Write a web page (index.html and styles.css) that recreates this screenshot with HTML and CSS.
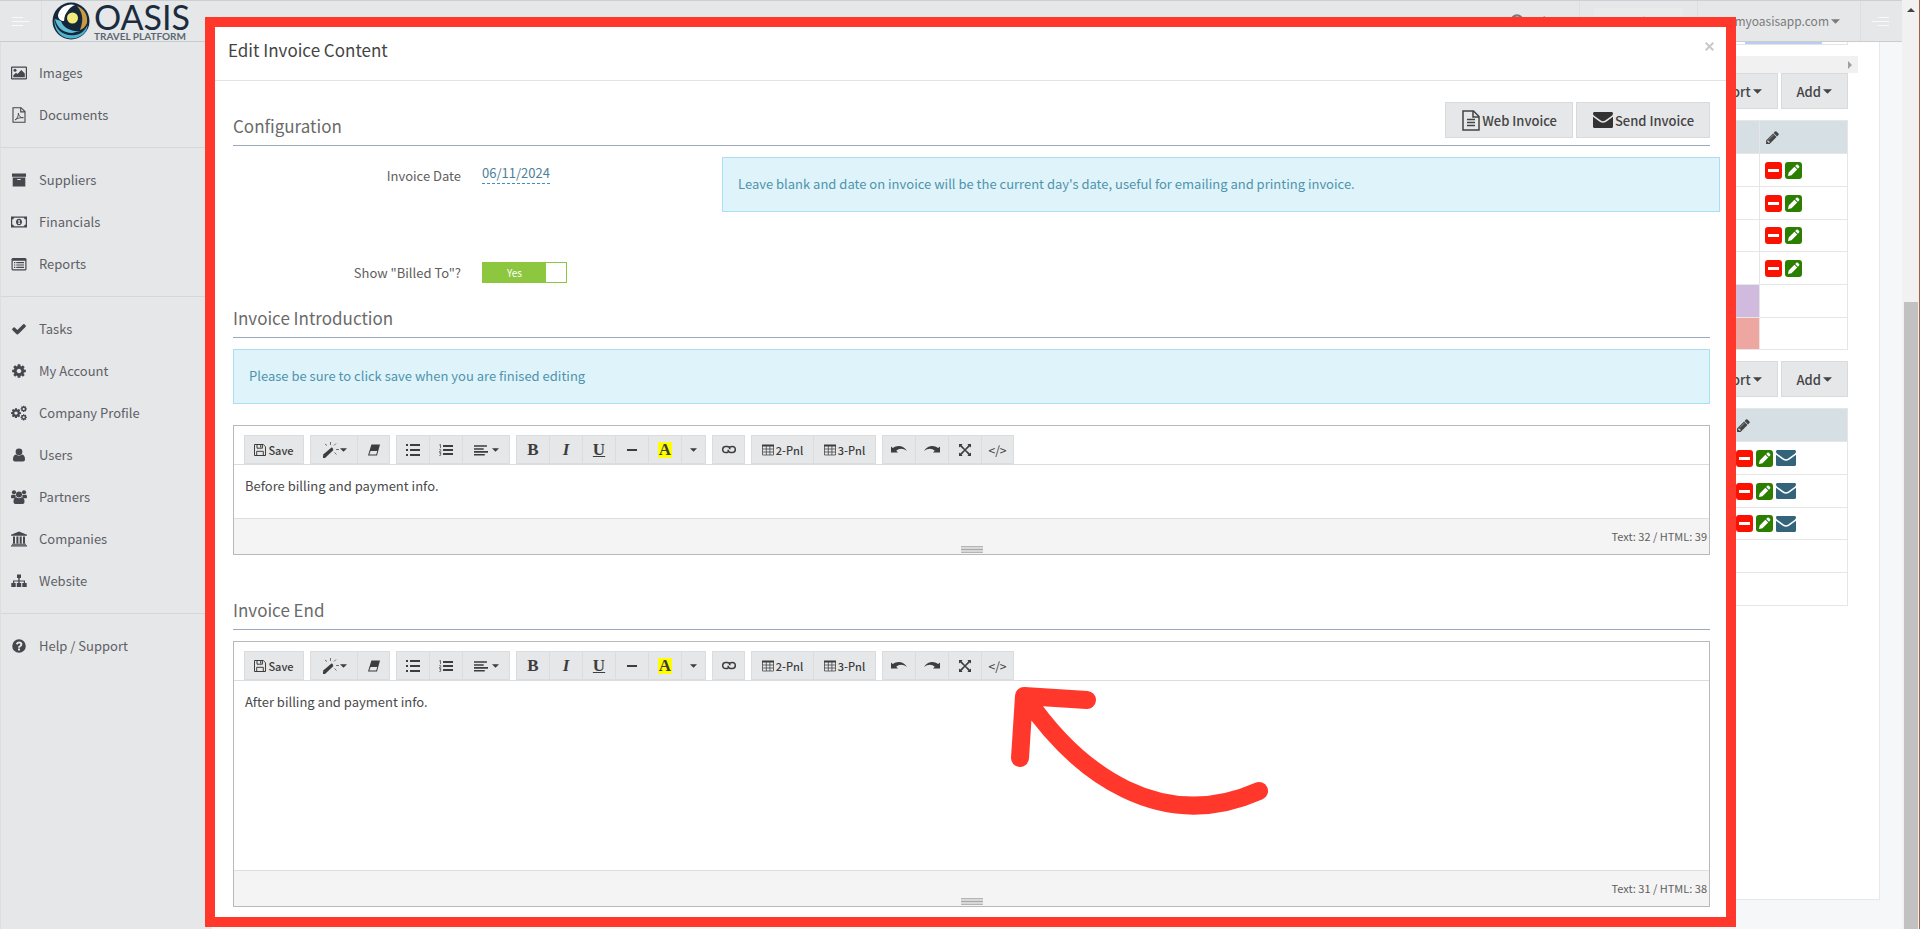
FILE: index.html
```html
<!DOCTYPE html>
<html lang="en">
<head>
    <meta charset="UTF-8">
    <meta name="viewport" content="width=device-width, initial-scale=1.0">
    <title>Edit Invoice Content</title>
    <link rel="stylesheet" href="styles.css">
</head>
<body>
    <!-- icon set -->
    <svg class="sprite" aria-hidden="true">
        <symbol id="i-image" viewBox="0 0 16 16"><path fill-rule="evenodd" d="M1 1.500h14a1 1 0 0 1 1 1v11a1 1 0 0 1-1 1H1a1 1 0 0 1-1-1v-11a1 1 0 0 1 1-1zM1.200 2.700v10.600h13.600V2.700z"/><circle cx="4" cy="5.300" r="1.500"/><path d="M2.300 12.300v-2L5 7.700l1.500 1.400L10.300 5l3.500 3.600v3.700z"/></symbol>
        <symbol id="i-pdf" viewBox="0 0 16 16"><g fill="none" stroke="currentColor" stroke-width="1.100"><path d="M2 .7h8L14 4.600v10.700H2z"/><path d="M9.700.7v4.200H14"/><path d="M4 13c2-1 3.800-4.500 3.400-7 .2 3 2.200 5 5 4.700C9 10.300 6 11.400 4 13z" stroke-width=".9"/></g></symbol>
        <symbol id="i-archive" viewBox="0 0 16 16"><path d="M1 1.500h14v3.300H1z"/><path fill-rule="evenodd" d="M1.700 5.600h12.600v9H1.700zM6.300 7v1.100h3.400V7z"/></symbol>
        <symbol id="i-money" viewBox="0 0 16 16"><path fill-rule="evenodd" d="M0 2.500h16v11H0zM3 3.700A2 2 0 0 1 1.200 5.600v4.800A2 2 0 0 1 3 12.300h10a2 2 0 0 1 1.800-1.900V5.600A2 2 0 0 1 13 3.700z"/><path fill-rule="evenodd" d="M8 4.700c1.900 0 3 1.500 3 3.300s-1.100 3.300-3 3.300S5 9.800 5 8s1.100-3.300 3-3.300zM7 6.800v.8h.6v1.700H7v.8h2.300v-.8h-.6V5.900H8z"/></symbol>
        <symbol id="i-listalt" viewBox="0 0 16 16"><path fill-rule="evenodd" d="M1.500 2h13l1 1v10.500l-1 1h-13l-1-1V3zM1.700 4.800v8.500h12.600V4.800z"/><path d="M3 6h1.300v1.200H3zM5.300 6H13v1.200H5.300zM3 8.400h1.300v1.200H3zM5.300 8.400H13v1.200H5.300zM3 10.800h1.300V12H3zM5.300 10.800H13V12H5.300z"/></symbol>
        <symbol id="i-check" viewBox="0 0 1792 1792"><path d="M1671 566q0 40-28 68l-724 724-136 136q-28 28-68 28t-68-28l-136-136-362-362q-28-28-28-68t28-68l136-136q28-28 68-28t68 28l294 295 656-657q28-28 68-28t68 28l136 136q28 28 28 68z"/></symbol>
        <symbol id="i-cog" viewBox="0 0 1792 1792"><path d="M1152 896q0-106-75-181t-181-75-181 75-75 181 75 181 181 75 181-75 75-181zm512-109v222q0 12-8 23t-20 13l-185 28q-19 54-39 91 35 50 107 138 10 12 10 25t-9 23q-27 37-99 108t-94 71q-12 0-26-9l-138-108q-44 23-91 38-16 136-29 186-7 28-36 28h-222q-14 0-24.500-8.500t-11.500-21.500l-28-184q-49-16-90-37l-141 107q-10 9-25 9-14 0-25-11-126-114-165-168-7-10-7-23 0-12 8-23 15-21 51-66.500t54-70.500q-27-50-41-99l-183-27q-13-2-21-12.500t-8-23.500v-222q0-12 8-23t19-13l186-28q14-46 39-92-40-57-107-138-10-12-10-24 0-10 9-23 26-36 98.500-107.500t94.500-71.500q13 0 26 10l138 107q44-23 91-38 16-136 29-186 7-28 36-28h222q14 0 24.500 8.500t11.500 21.500l28 184q49 16 90 37l142-107q9-9 24-9 13 0 25 10 129 119 165 170 7 8 7 22 0 12-8 23-15 21-51 66.500t-54 70.500q26 50 41 98l183 28q13 2 21 12.500t8 23.500z"/></symbol>
        <symbol id="i-cogs" viewBox="0 0 16 16"><use href="#i-cog" x="-.8" y="2.300" width="11.600" height="11.600"/><use href="#i-cog" x="9" y=".2" width="7.400" height="7.400"/><use href="#i-cog" x="9" y="8.600" width="7.400" height="7.400"/></symbol>
        <symbol id="i-user" viewBox="0 0 16 16"><circle cx="8" cy="4.800" r="3.400"/><path d="M5 7.500C2.800 8 2 9.800 2 12.300c0 1.400.8 2.200 2 2.200h8c1.200 0 2-.8 2-2.200 0-2.500-.8-4.300-3-4.800-1.600 1.500-4.400 1.500-6 0z"/></symbol>
        <symbol id="i-group" viewBox="0 0 16 16"><circle cx="3" cy="3.300" r="2.100"/><circle cx="13" cy="3.300" r="2.100"/><circle cx="8" cy="5.600" r="3"/><path d="M1.200 5.500C.3 6 0 7 0 8.200c0 .6.400 1 1 1h2.800C5 8.400 4.600 6.800 4.600 5.800c-1.200.5-2.500.4-3.400-.3zM14.800 5.500c.9.500 1.200 1.500 1.200 2.700 0 .6-.4 1-1 1h-2.800c-1.200-.8-.8-2.400-.8-3.400 1.200.5 2.500.4 3.400-.3zM5.200 8.300c-2 .4-2.700 2-2.700 4.400 0 1.300.8 2.300 2 2.300h7c1.200 0 2-1 2-2.300 0-2.400-.7-4-2.700-4.400-1.600 1.300-4 1.300-5.600 0z"/></symbol>
        <symbol id="i-bank" viewBox="0 0 16 16"><path d="M8 .5l8 3.200v1H0v-1zM2 5.500h2v7H2zM5.400 5.500h2v7h-2zM8.700 5.500h2v7h-2zM12 5.500h2v7h-2zM1 12.800h14v1H1zM0 14.200h16v1.300H0z"/></symbol>
        <symbol id="i-sitemap" viewBox="0 0 16 16"><path d="M6 1.500h4V5H8.700v2.500H14V10h1.700v4h-4.400v-4h1.500V8.600H8.700V10h1.500v4H5.800v-4h1.500V8.600H3.200V10h1.500v4H.3v-4H2V7.500h5.300V5H6z"/></symbol>
        <symbol id="i-help" viewBox="0 0 16 16"><path fill-rule="evenodd" d="M8 1.200a6.800 6.800 0 1 1 0 13.600A6.800 6.800 0 0 1 8 1.200zM7 10.500v2h2v-2zM4.900 5.700l1.400 1.100C7 5.800 7.500 5.500 8.200 5.500c.8 0 1.100.4 1.100.9 0 1-2.300 1.100-2.300 3.300h2c0-1.100 2.400-1.300 2.400-3.500C11.400 4.600 10 3.500 8.300 3.500c-1.500 0-2.600.7-3.400 2.200z"/></symbol>
        <symbol id="i-share" viewBox="0 0 16 16"><path d="M4 1h10v9l-3-3-7 8-3-3 8-7z"/></symbol>
        <symbol id="i-pencil" viewBox="0 0 1792 1792"><path d="M491 1536l91-91-235-235-91 91v107h128v128h107zm523-928q0-22-22-22-10 0-17 7l-542 542q-7 7-7 17 0 22 22 22 10 0 17-7l542-542q7-7 7-17zm-54-192l416 416-832 832h-416v-416zm683 96q0 53-37 90l-166 166-416-416 166-165q36-38 90-38 53 0 91 38l235 234q37 39 37 91z"/></symbol>
        <symbol id="i-minusbox" viewBox="0 0 17 17"><rect width="17" height="17" rx="3" fill="#fb1100"/><path fill="#fff" d="M3 7h11v3H3z"/></symbol>
        <symbol id="i-editbox" viewBox="0 0 17 17"><rect width="17" height="17" rx="3" fill="#2a7f00"/><path fill="#fff" d="M3 14l.7-3.400 5.700-5.800L12.200 7.600 6.500 13.300zM10.200 4l1.200-1.200c.5-.4 1-.4 1.400 0l1.300 1.300c.4.500.4 1 0 1.400L12.900 6.800z"/></symbol>
        <symbol id="i-mail" viewBox="0 0 20 16"><path d="M0 1.500C0 .6.600 0 1.500 0h17c.9 0 1.500.6 1.500 1.500 0 1-.6 1.800-1.500 2.500l-6.300 4.500c-1.600 1-2.800 1-4.400 0L1.500 4C.6 3.300 0 2.500 0 1.500zM0 4.800l6.800 4.900c2.300 1.500 4.100 1.500 6.400 0L20 4.800v9.700c0 .9-.6 1.500-1.500 1.500h-17C.6 16 0 15.400 0 14.500z"/></symbol>
        <symbol id="i-file" viewBox="0 0 18 21"><g fill="none" stroke="currentColor" stroke-width="1.500"><path d="M1 1h10.500L17 6.500V20H1z"/><path d="M11 1v6h6M5 9.500h8M5 12.500h8M5 15.500h8"/></g></symbol>
        <symbol id="i-save" viewBox="0 0 12 12"><g fill="none" stroke="currentColor"><path d="M.5.500h8.800l2.200 2.200v8.800H.5z"/><path d="M3 .5v3.700h5.400V.5M2.700 11.500V7.300h6.600v4.200M6.700 1v2.500"/></g></symbol>
        <symbol id="i-magic" viewBox="0 0 18 16"><path d="M1 14l8.500-8 2 2L3 16H1z"/><path d="M1.500 13.500l9-7.500" stroke="currentColor" stroke-width="2"/><path fill="none" stroke="currentColor" stroke-opacity=".7" d="M8.500 0v3M3 2l2 1.600M14 1.500l-2 2M14 7.500h3M12.500 10.500l2 2"/></symbol>
        <symbol id="i-eraser" viewBox="0 0 12 12"><path fill-rule="evenodd" d="M3.400.5H12L9 11.500H0zM2.600 7l-1.300 3.500h6.900L9.300 7z"/></symbol>
        <symbol id="i-ul" viewBox="0 0 14 12"><path d="M0 0h2v2H0zM4 0h10v2H4zM0 5h2v2H0zM4 5h10v2H4zM0 10h2v2H0zM4 10h10v2H4z"/></symbol>
        <symbol id="i-ol" viewBox="0 0 14 12"><path d="M4 1h10v2H4zM4 5h10v2H4zM4 9h10v2H4z"/><path fill="none" stroke="currentColor" stroke-width=".7" d="M.3 1L1.500.4V4M.3 5.600c1-.8 2 0 1.500.8L.3 8h2M.3 9h1.700L1.200 10c1.300.2 1 1.700-.9 1.500"/></symbol>
        <symbol id="i-align" viewBox="0 0 13 11"><path d="M0 1h12v1.500H0zM0 3.800h9v1.500H0zM0 6.500h13V8H0zM0 9.200h10v1.500H0z"/></symbol>
        <symbol id="i-minus" viewBox="0 0 10 12"><path d="M0 5h10v2H0z"/></symbol>
        <symbol id="i-link" viewBox="0 0 16 10"><g fill="none" stroke="currentColor" stroke-width="1.700"><path d="M7.300 7.600c-.8.600-1.500.8-3 .8C2.200 8.400 1 7 1 5s1.200-3.400 3.300-3.400h1.600C8 1.600 9 3 9 4.600"/><path d="M8.700 2.400c.8-.6 1.500-.8 3-.8C13.800 1.600 15 3 15 5s-1.200 3.400-3.300 3.400h-1.600C8 8.400 7 7 7 5.400"/></g></symbol>
        <symbol id="i-table" viewBox="0 0 12 11"><g fill="none" stroke="currentColor"><path d="M.5 1h11v9.500H.5zM.5 4.500h11M.5 7.500h11M4.300 1v9.500M7.900 1v9.500" stroke-opacity=".75"/><path d="M0 1h12" stroke-width="2"/></g></symbol>
        <symbol id="i-undo" viewBox="0 0 16 8"><path d="M0 1l1.800 1.600C6-.8 12.500-.5 16 5.500 12 2.300 8 2.500 5.200 5.200L7 7H0z"/></symbol>
        <symbol id="i-redo" viewBox="0 0 16 8"><path d="M16 1l-1.800 1.600C10-.8 3.500-.5 0 5.500 4 2.300 8 2.500 10.800 5.200L9 7h7z"/></symbol>
        <symbol id="i-expand" viewBox="0 0 12 12"><path d="M0 0h3.600L2.600 1.200 6 5l3.400-3.800L8.400 0H12v3.600l-1.200-1L7 6l3.800 3.400 1.200-1V12H8.400l1-1.200L6 7l-3.400 3.800 1 1.200H0V8.400l1.200 1L5 6 1.200 2.600 0 3.600z"/></symbol>
        <symbol id="i-caret" viewBox="0 0 8 4"><path d="M0 0h8L4 4z"/></symbol>
    </svg>

    <div class="app">
        <header class="topbar">
            <button class="menu-toggle" aria-label="Toggle menu"><span></span><span></span><span></span></button>
            <a class="logo" href="#">
                <svg width="38" height="38" viewBox="0 0 38 38">
                    <circle cx="19" cy="19" r="18.500" fill="#14283a"/>
                    <path fill="#4fb3cf" d="M2.500 16c0 12 10 19 21 17 6-1 10-5 12-10 0 8-8 13.500-16 13.500C9 36.500 1 28 2.500 16z"/>
                    <path fill="#62bdd4" d="M3 17c2 9 9 14 17 14l8-2C20 30 11 26 9 19z"/>
                    <path fill="#fff" d="M6 13C8 4 17 1 23 3c-5 2-9 6-11 16-3 0-6-2-6-6z"/>
                    <path fill="#c99a45" d="M25 4c8 3 11 10 10 17-2 4-4 6-7 7 3-8 4-16-3-24z"/>
                    <circle cx="20" cy="16" r="7.500" fill="#14283a"/>
                    <circle cx="20.500" cy="16" r="5.500" fill="#f3ec7c"/>
                </svg>
                <span class="logo-text"><span class="logo-name">OASIS</span><span class="logo-tag">TRAVEL PLATFORM</span></span>
            </a>
            <nav class="top-links">
                <a class="top-link" href="#"><svg class="ico"><use href="#i-help"/></svg>Help</a>
                <span class="top-cell"><button class="quick-add"><svg class="ico ico-sm"><use href="#i-share"/></svg>Quick Add</button></span>
                <a class="top-link account" href="#">test@myoasisapp.com<svg class="caret"><use href="#i-caret"/></svg></a>
                <button class="menu-toggle right" aria-label="Toggle panel"><span></span><span></span><span></span></button>
            </nav>
        </header>

        <div class="layout">
            <nav class="sidebar">
                <a href="#"><svg class="ico"><use href="#i-image"/></svg>Images</a>
                <a href="#"><svg class="ico"><use href="#i-pdf"/></svg>Documents</a>
                <hr>
                <a href="#"><svg class="ico"><use href="#i-archive"/></svg>Suppliers</a>
                <a href="#"><svg class="ico"><use href="#i-money"/></svg>Financials</a>
                <a href="#"><svg class="ico"><use href="#i-listalt"/></svg>Reports</a>
                <hr>
                <a href="#"><svg class="ico"><use href="#i-check"/></svg>Tasks</a>
                <a href="#"><svg class="ico"><use href="#i-cog"/></svg>My Account</a>
                <a href="#"><svg class="ico"><use href="#i-cogs"/></svg>Company Profile</a>
                <a href="#"><svg class="ico"><use href="#i-user"/></svg>Users</a>
                <a href="#"><svg class="ico"><use href="#i-group"/></svg>Partners</a>
                <a href="#"><svg class="ico"><use href="#i-bank"/></svg>Companies</a>
                <a href="#"><svg class="ico"><use href="#i-sitemap"/></svg>Website</a>
                <hr>
                <a href="#"><svg class="ico"><use href="#i-help"/></svg>Help / Support</a>
            </nav>

            <main class="content">
                <div class="panel">
                    <div class="table-end"><span></span></div>
                    <div class="h-scroll"><svg width="4" height="8" viewBox="0 0 4 8"><path d="M0 0l4 4-4 4z"/></svg></div>
                    <div class="panel-buttons">
                        <button class="btn">Export<svg class="caret"><use href="#i-caret"/></svg></button>
                        <button class="btn">Add<svg class="caret"><use href="#i-caret"/></svg></button>
                    </div>
                    <table class="grid-table">
                        <thead><tr><th></th><th class="col-actions"><svg class="ico ico-pencil"><use href="#i-pencil"/></svg></th></tr></thead>
                        <tbody>
                            <tr><td></td><td><div class="acts"><svg><use href="#i-minusbox"/></svg><svg><use href="#i-editbox"/></svg></div></td></tr>
                            <tr><td></td><td><div class="acts"><svg><use href="#i-minusbox"/></svg><svg><use href="#i-editbox"/></svg></div></td></tr>
                            <tr><td></td><td><div class="acts"><svg><use href="#i-minusbox"/></svg><svg><use href="#i-editbox"/></svg></div></td></tr>
                            <tr><td></td><td><div class="acts"><svg><use href="#i-minusbox"/></svg><svg><use href="#i-editbox"/></svg></div></td></tr>
                            <tr><td class="purple"></td><td></td></tr>
                            <tr><td class="red"></td><td></td></tr>
                        </tbody>
                    </table>
                    <div class="panel-buttons">
                        <button class="btn">Export<svg class="caret"><use href="#i-caret"/></svg></button>
                        <button class="btn">Add<svg class="caret"><use href="#i-caret"/></svg></button>
                    </div>
                    <table class="grid-table">
                        <thead><tr><th></th><th class="col-wide"><svg class="ico ico-pencil"><use href="#i-pencil"/></svg></th></tr></thead>
                        <tbody>
                            <tr><td></td><td><div class="acts"><svg><use href="#i-minusbox"/></svg><svg><use href="#i-editbox"/></svg><svg class="mail"><use href="#i-mail"/></svg></div></td></tr>
                            <tr><td></td><td><div class="acts"><svg><use href="#i-minusbox"/></svg><svg><use href="#i-editbox"/></svg><svg class="mail"><use href="#i-mail"/></svg></div></td></tr>
                            <tr><td></td><td><div class="acts"><svg><use href="#i-minusbox"/></svg><svg><use href="#i-editbox"/></svg><svg class="mail"><use href="#i-mail"/></svg></div></td></tr>
                            <tr><td></td><td></td></tr>
                            <tr><td></td><td></td></tr>
                        </tbody>
                    </table>
                </div>
            </main>
        </div>
    </div>

    <div class="page-scroll">
        <svg width="8" height="4" viewBox="0 0 8 4"><path d="M0 4l4-4 4 4z"/></svg>
        <div class="thumb"></div>
    </div>

    <div class="modal" role="dialog" aria-labelledby="modal-title">
        <div class="modal-header">
            <h1 id="modal-title">Edit Invoice Content</h1>
            <button class="close" aria-label="Close"><svg width="9" height="9" viewBox="0 0 9 9"><path d="M.7.7l7.600 7.600M8.300.7L.7 8.300"/></svg></button>
        </div>
        <div class="modal-body">
            <div class="section-title first">
                <h2>Configuration</h2>
                <div class="title-buttons">
                    <button class="btn"><svg class="ico-file"><use href="#i-file"/></svg>Web Invoice</button>
                    <button class="btn"><svg class="ico-mail"><use href="#i-mail"/></svg>Send Invoice</button>
                </div>
            </div>
            <div class="form-row">
                <span class="label">Invoice Date</span>
                <div class="value"><a class="editable" href="#">06/11/2024</a></div>
                <div class="alert">Leave blank and date on invoice will be the current day's date, useful for emailing and printing invoice.</div>
            </div>
            <div class="form-row toggle-row">
                <label class="label" for="billed-to">Show "Billed To"?</label>
                <label class="switch"><input type="checkbox" id="billed-to" checked><span class="on">Yes</span><span class="knob"></span></label>
            </div>

            <div class="section-title intro"><h2>Invoice Introduction</h2></div>
            <div class="alert">Please be sure to click save when you are finised editing</div>
            <div class="editor">
                <div class="toolbar">
                    <div class="group"><button class="tool save"><svg class="t12"><use href="#i-save"/></svg>Save</button></div>
                    <div class="group">
                        <button class="tool wide" aria-label="Style"><svg class="t-magic"><use href="#i-magic"/></svg><svg class="t-caret"><use href="#i-caret"/></svg></button>
                        <button class="tool" aria-label="Clear"><svg class="t12"><use href="#i-eraser"/></svg></button>
                    </div>
                    <div class="group">
                        <button class="tool" aria-label="Bullets"><svg class="t14"><use href="#i-ul"/></svg></button>
                        <button class="tool" aria-label="Numbers"><svg class="t14"><use href="#i-ol"/></svg></button>
                        <button class="tool wide" aria-label="Align"><svg class="t14"><use href="#i-align"/></svg><svg class="t-caret gap"><use href="#i-caret"/></svg></button>
                    </div>
                    <div class="group">
                        <button class="tool serif"><b>B</b></button>
                        <button class="tool serif"><b><i>I</i></b></button>
                        <button class="tool serif"><b><u>U</u></b></button>
                        <button class="tool" aria-label="Line"><svg class="t-minus"><use href="#i-minus"/></svg></button>
                        <button class="tool serif"><b class="mark">A</b></button>
                        <button class="tool narrow" aria-label="Colors"><svg class="t-caret"><use href="#i-caret"/></svg></button>
                    </div>
                    <div class="group"><button class="tool" aria-label="Link"><svg class="t16"><use href="#i-link"/></svg></button></div>
                    <div class="group">
                        <button class="tool pnl"><svg class="t12"><use href="#i-table"/></svg>2-Pnl</button>
                        <button class="tool pnl"><svg class="t12"><use href="#i-table"/></svg>3-Pnl</button>
                    </div>
                    <div class="group">
                        <button class="tool" aria-label="Undo"><svg class="t16"><use href="#i-undo"/></svg></button>
                        <button class="tool" aria-label="Redo"><svg class="t16"><use href="#i-redo"/></svg></button>
                        <button class="tool" aria-label="Full screen"><svg class="t12"><use href="#i-expand"/></svg></button>
                        <button class="tool code">&lt;/&gt;</button>
                    </div>
                </div>
                <textarea class="edit-area" aria-label="Invoice introduction">Before billing and payment info.</textarea>
                <div class="status"><span class="grip"></span><span class="count">Text: 32 / HTML: 39</span></div>
            </div>

            <div class="section-title end"><h2>Invoice End</h2></div>
            <div class="editor tall">
                <div class="toolbar">
                    <div class="group"><button class="tool save"><svg class="t12"><use href="#i-save"/></svg>Save</button></div>
                    <div class="group">
                        <button class="tool wide" aria-label="Style"><svg class="t-magic"><use href="#i-magic"/></svg><svg class="t-caret"><use href="#i-caret"/></svg></button>
                        <button class="tool" aria-label="Clear"><svg class="t12"><use href="#i-eraser"/></svg></button>
                    </div>
                    <div class="group">
                        <button class="tool" aria-label="Bullets"><svg class="t14"><use href="#i-ul"/></svg></button>
                        <button class="tool" aria-label="Numbers"><svg class="t14"><use href="#i-ol"/></svg></button>
                        <button class="tool wide" aria-label="Align"><svg class="t14"><use href="#i-align"/></svg><svg class="t-caret gap"><use href="#i-caret"/></svg></button>
                    </div>
                    <div class="group">
                        <button class="tool serif"><b>B</b></button>
                        <button class="tool serif"><b><i>I</i></b></button>
                        <button class="tool serif"><b><u>U</u></b></button>
                        <button class="tool" aria-label="Line"><svg class="t-minus"><use href="#i-minus"/></svg></button>
                        <button class="tool serif"><b class="mark">A</b></button>
                        <button class="tool narrow" aria-label="Colors"><svg class="t-caret"><use href="#i-caret"/></svg></button>
                    </div>
                    <div class="group"><button class="tool" aria-label="Link"><svg class="t16"><use href="#i-link"/></svg></button></div>
                    <div class="group">
                        <button class="tool pnl"><svg class="t12"><use href="#i-table"/></svg>2-Pnl</button>
                        <button class="tool pnl"><svg class="t12"><use href="#i-table"/></svg>3-Pnl</button>
                    </div>
                    <div class="group">
                        <button class="tool" aria-label="Undo"><svg class="t16"><use href="#i-undo"/></svg></button>
                        <button class="tool" aria-label="Redo"><svg class="t16"><use href="#i-redo"/></svg></button>
                        <button class="tool" aria-label="Full screen"><svg class="t12"><use href="#i-expand"/></svg></button>
                        <button class="tool code">&lt;/&gt;</button>
                    </div>
                </div>
                <textarea class="edit-area" aria-label="Invoice end">After billing and payment info.</textarea>
                <div class="status"><span class="grip"></span><span class="count">Text: 31 / HTML: 38</span></div>
                <svg class="arrow" width="270" height="134" viewBox="0 0 270 134"><path d="M16 73l4-62 63 4M22 13c53 77 136 136 233 93"/></svg>
            </div>
        </div>
    </div>
</body>
</html>
```

FILE: styles.css
```css
* {
    box-sizing: border-box;
}

body {
    display: flex;
    height: 100vh;
    margin: 0;
    overflow: hidden;
    position: relative;
    font-family: "Noto Sans CJK SC", "Open Sans", sans-serif;
    font-size: 13px;
    line-height: 20px;
    color: #5e5e5e;
    background: #f5f7f9;
}

a {
    color: inherit;
    text-decoration: none;
}

button {
    font-family: inherit;
    padding: 0;
    border: none;
    background: none;
    cursor: pointer;
}

svg {
    display: block;
    flex: none;
    fill: currentColor;
}

h1, h2 {
    margin: 0;
    font-weight: normal;
    font-size: 17px;
    line-height: 24px;
}

.sprite {
    position: absolute;
    width: 0;
    height: 0;
}

.ico {
    width: 16px;
    height: 16px;
}

.ico-sm {
    width: 9px;
    height: 9px;
}

.ico-pencil {
    width: 15px;
    height: 15px;
}

.caret {
    width: 9px;
    height: 5px;
    margin-left: 2px;
}

.app {
    flex: 1;
    display: flex;
    flex-direction: column;
    min-width: 0;
}

/* top bar */
.topbar {
    display: flex;
    height: 42px;
    background: #e5e7e9;
    border-top: 1px solid #cdcfd1;
    border-bottom: 1px solid #cacccf;
    color: #7b7b7b;
    font-size: 12px;
}

.menu-toggle {
    display: flex;
    flex-direction: column;
    justify-content: center;
    gap: 3px;
    width: 42px;
    padding: 0 13px 0 12px;
    border-right: 1px solid #dcdee0;
}

.menu-toggle span {
    height: 1px;
    width: 11px;
    background: #f8f9fa;
}

.menu-toggle span:nth-child(2) {
    width: 17px;
}

.menu-toggle.right {
    border-right: none;
    border-left: 1px solid #dcdee0;
    align-items: flex-end;
}

.logo {
    display: flex;
    align-items: center;
    gap: 4px;
    padding-left: 10px;
    color: #1b2c3e;
}

.logo-text {
    display: flex;
    flex-direction: column;
    font-family: Lato, sans-serif;
}

.logo-name {
    font-size: 34px;
    line-height: 30px;
}

.logo-tag {
    font-size: 10px;
    line-height: 9px;
    font-weight: bold;
    color: #5b6772;
}

.top-links {
    display: flex;
    margin-left: auto;
}

.top-link,
.top-cell {
    display: flex;
    align-items: center;
    gap: 2px;
    padding: 0 14px;
    border-left: 1px solid #dcdee0;
}

.top-link:first-child {
    border-left: none;
    padding-right: 26px;
}

.account {
    padding: 0 20px 0 4px;
    gap: 0;
}

.quick-add {
    display: flex;
    align-items: center;
    gap: 4px;
    height: 26px;
    padding: 0 7px;
    background: #e9ebeb;
    color: #666;
    font-size: 13px;
}

.layout {
    flex: 1;
    display: flex;
    min-height: 0;
}

/* sidebar */
.sidebar {
    flex: none;
    width: 212px;
    padding-top: 10px;
    background: #e5e7e9;
    border-left: 1px solid #dcdee0;
}

.sidebar a {
    display: flex;
    align-items: center;
    gap: 12px;
    height: 42px;
    padding-left: 10px;
    color: #5f5f66;
}

.sidebar .ico {
    color: #45474f;
}

.sidebar hr {
    height: 1px;
    margin: 11px 0;
    border: none;
    background: #d5d7d9;
}

/* page behind the dialog */
.content {
    flex: 1;
    padding: 0 22px 29px 0;
    min-width: 0;
}

.panel {
    height: 100%;
    padding-right: 21px;
    background: #fff;
    border: 1px solid #e6e8ea;
    border-width: 0 1px 1px 0;
}

.table-end {
    height: 3px;
    margin: 0 10px 11px 0;
    padding-right: 25px;
    border: 1px solid #e4e4e4;
    border-top: none;
}

.table-end span {
    display: block;
    width: 77px;
    height: 2px;
    margin-left: auto;
    background: #b9cdf0;
}

.h-scroll {
    display: flex;
    align-items: center;
    justify-content: flex-end;
    height: 17px;
    padding-right: 6px;
    background: #f1f1f1;
    color: #a0a0a0;
}

.panel-buttons {
    display: flex;
    justify-content: flex-end;
    gap: 3px;
    margin: 0 10px 11px 0;
}

.btn {
    display: flex;
    align-items: center;
    height: 36px;
    padding: 0 15px 0 16px;
    background: #e5e7e9;
    border: 1px solid #d8dadc;
    color: #444;
    font-size: 13px;
    font-weight: 500;
}

.panel-buttons .btn {
    padding: 0 15px;
}

.grid-table {
    width: calc(100% - 10px);
    margin-bottom: 11px;
    border-collapse: collapse;
    table-layout: fixed;
}

.grid-table th,
.grid-table td {
    height: 33px;
    padding: 0 5px;
    border: 1px solid #e6e6e6;
}

.grid-table tr:nth-child(3n) td {
    height: 32px;
}

.grid-table th {
    background: #d6dfe4;
    color: #444;
}

.col-actions {
    width: 88px;
}

.col-wide {
    width: 117px;
}

.grid-table .purple {
    background: #d0badd;
}

.grid-table .red {
    background: #eea6a0;
}

.acts {
    display: flex;
    align-items: center;
    gap: 3px;
}

.acts svg {
    width: 17px;
    height: 17px;
}

.acts .mail {
    width: 20px;
    height: 16px;
    color: #33647b;
}

.page-scroll {
    flex: none;
    display: flex;
    flex-direction: column;
    align-items: center;
    width: 18px;
    padding-top: 8px;
    background: #f1f1f1;
    border-right: 1px solid #a5603f;
    color: #444;
}

.thumb {
    flex: 1;
    width: 14px;
    margin-top: 290px;
    background: #c1c1c1;
}

/* dialog */
.modal {
    position: absolute;
    top: 17px;
    right: 184px;
    bottom: 2px;
    left: 205px;
    border: 10px solid #ff382b;
    background: #fff;
}

.modal-header {
    display: flex;
    justify-content: space-between;
    align-items: center;
    padding: 11px 12px 18px 13px;
    border-bottom: 1px solid #e3e3e3;
    color: #444;
}

.close {
    padding: 0 0 8px;
}

.close svg {
    fill: none;
    stroke: #c9c9c9;
    stroke-width: 2;
}

.modal-body {
    padding: 0 16px 0 18px;
}

.section-title {
    display: flex;
    justify-content: space-between;
    align-items: flex-end;
    margin-bottom: 11px;
    padding-bottom: 7px;
    border-bottom: 1px solid #9aa9bb;
    color: #6a6a6a;
}

.section-title.first {
    padding-top: 21px;
}

.section-title.intro {
    margin-top: 23px;
}

.section-title.end {
    margin-top: 43px;
}

.title-buttons {
    display: flex;
    gap: 3px;
}

.ico-file {
    width: 18px;
    height: 21px;
    margin-right: 2px;
}

.ico-mail {
    width: 20px;
    height: 16px;
    margin-right: 2px;
    color: #333;
}

.form-row {
    display: grid;
    grid-template-columns: 228px 219px 1fr;
    column-gap: 21px;
    margin-right: -10px;
}

.label {
    padding-top: 9px;
    text-align: right;
}

.value {
    padding-top: 6px;
}

.editable {
    display: inline-block;
    border-bottom: 1px dashed #3c8fc0;
    color: #4c8199;
}

.alert {
    padding: 16px 15px 17px;
    border: 1px solid #a9dff0;
    background: #dff3fb;
    color: #4f93ab;
}

.toggle-row {
    align-items: center;
    margin-top: 50px;
}

.toggle-row .label {
    padding-top: 0;
    line-height: 21px;
}

.switch {
    display: flex;
    width: 85px;
    height: 21px;
    border: 1px solid #8dc63f;
    background: #8dc63f;
    color: #fff;
    font-size: 10px;
    line-height: 19px;
    position: relative;
}

.switch input {
    position: absolute;
    opacity: 0;
    margin: 0;
}

.switch .on {
    flex: 1;
    text-align: center;
}

.switch .knob {
    width: 20px;
    background: #fff;
}

/* editors */
.editor {
    position: relative;
    margin-top: 21px;
    border: 1px solid #b9b9b9;
}

.editor.tall {
    margin-top: 0;
}

.toolbar {
    display: flex;
    gap: 6px;
    padding: 9px 10px 0;
    border-bottom: 1px solid #dcdcdc;
}

.group {
    display: flex;
}

.tool {
    display: flex;
    align-items: center;
    justify-content: center;
    width: 34px;
    height: 29px;
    margin-right: -1px;
    background: #e5e7e9;
    border: 1px solid #dadcde;
    color: #3d3d3d;
    font-size: 11px;
}

.group .tool:last-child {
    width: 33px;
    margin-right: 0;
}

.group .tool.save {
    width: 60px;
    gap: 2px;
    font-weight: 500;
}

.group .tool.wide {
    width: 48px;
}

.group .tool.narrow {
    width: 25px;
}

.group .tool.pnl {
    width: 63px;
    gap: 2px;
    font-weight: 500;
}

.tool.serif {
    font-family: "Liberation Serif", serif;
    font-size: 17px;
}

.tool.code {
    font-size: 12px;
}

.mark {
    padding: 0 1px;
    background: #ff0;
    line-height: 16px;
}

.t12 {
    width: 12px;
    height: 12px;
}

.t14 {
    width: 14px;
    height: 12px;
}

.t16 {
    width: 16px;
    height: 9px;
}

.t-magic {
    width: 18px;
    height: 16px;
}

.t-minus {
    width: 10px;
    height: 12px;
}

.t-caret {
    width: 7px;
    height: 4px;
}

.t-caret.gap {
    margin-left: 4px;
}

.edit-area {
    display: block;
    width: 100%;
    height: 53px;
    padding: 11px;
    border: none;
    resize: none;
    outline: none;
    font: inherit;
    color: #4a4a4a;
    background: #fff;
}

.tall .edit-area {
    height: 189px;
}

.status {
    display: grid;
    grid-template-columns: 1fr 22px 1fr;
    height: 36px;
    background: #f4f4f4;
    border-top: 1px solid #dedede;
    font-size: 11px;
}

.grip {
    grid-column: 2;
    align-self: end;
    height: 7px;
    margin-bottom: 1px;
    border: 1px solid #b5b5b5;
    border-width: 1px 0;
    background: linear-gradient(#d8d8d8 40%, #a9a9a9 40%, #a9a9a9 60%, #d8d8d8 60%);
}

.count {
    padding: 7px 2px 0;
    text-align: right;
}

/* pointer to the code view button */
.arrow {
    position: absolute;
    left: 770px;
    top: 43px;
    fill: none;
    stroke: #ff382b;
    stroke-width: 18;
    stroke-linecap: round;
    stroke-linejoin: round;
}
```
